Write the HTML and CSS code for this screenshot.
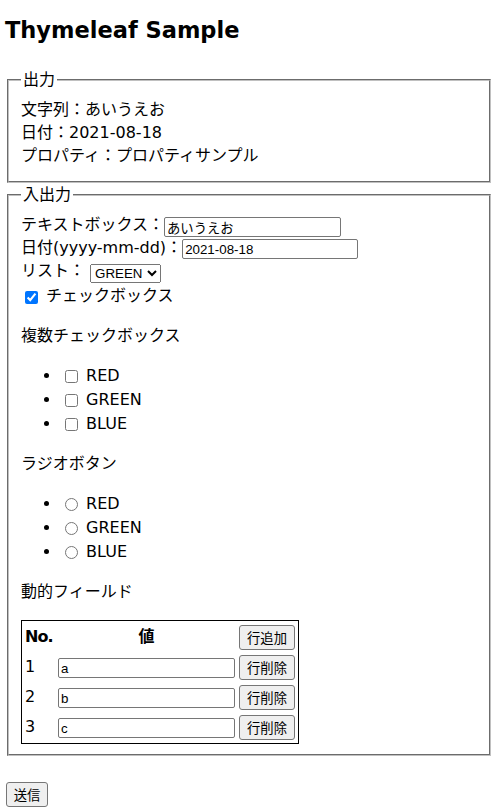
FILE: index.html
```html
<!DOCTYPE html>
<html lang="ja">
<head>
<meta charset="utf-8">
<title>Thymeleaf Sample</title>
<link rel="stylesheet" href="styles.css">
</head>
<body>
<h1 class="title">Thymeleaf Sample</h1>
<fieldset class="box box-out">
  <legend class="box-legend">出力</legend>
  <div class="out-line">文字列：あいうえお</div>
  <div class="out-line">日付：2021-08-18</div>
  <div class="out-line">プロパティ：プロパティサンプル</div>
</fieldset>
<form class="form">
  <fieldset class="box box-io">
    <legend class="box-legend">入出力</legend>
    <div class="field-row row-a">
      <span class="label">テキストボックス：</span>
      <input class="text-input w177 mt4" type="text" value="あいうえお">
    </div>
    <div class="field-row row-b">
      <span class="label">日付(yyyy-mm-dd)：</span>
      <input class="text-input w176 mt3" type="text" value="2021-08-18">
    </div>
    <div class="field-row row-c">
      <span class="label">リスト：</span>
      <select class="list-select">
        <option>RED</option>
        <option selected>GREEN</option>
        <option>BLUE</option>
      </select>
    </div>
    <div class="field-row row-c">
      <input class="single-check" type="checkbox" checked>
      <span class="label">チェックボックス</span>
    </div>
    <p class="section-title first">複数チェックボックス</p>
    <ul class="choice-list">
      <li><input class="choice" type="checkbox"> RED</li>
      <li><input class="choice" type="checkbox"> GREEN</li>
      <li><input class="choice" type="checkbox"> BLUE</li>
    </ul>
    <p class="section-title">ラジオボタン</p>
    <ul class="choice-list">
      <li><input class="choice" type="radio" name="color"> RED</li>
      <li><input class="choice" type="radio" name="color"> GREEN</li>
      <li><input class="choice" type="radio" name="color"> BLUE</li>
    </ul>
    <p class="section-title">動的フィールド</p>
    <table class="dyn-table">
      <tr>
        <th class="col-no">No.</th>
        <th>値</th>
        <th><button type="button" class="btn row-btn">行追加</button></th>
      </tr>
      <tr>
        <td>1</td>
        <td><input class="text-input w177 cell-input" type="text" value="a"></td>
        <td><button type="button" class="btn row-btn">行削除</button></td>
      </tr>
      <tr>
        <td>2</td>
        <td><input class="text-input w177 cell-input" type="text" value="b"></td>
        <td><button type="button" class="btn row-btn">行削除</button></td>
      </tr>
      <tr>
        <td>3</td>
        <td><input class="text-input w177 cell-input" type="text" value="c"></td>
        <td><button type="button" class="btn row-btn">行削除</button></td>
      </tr>
    </table>
  </fieldset>
  <button type="submit" class="btn submit-btn">送信</button>
</form>
</body>
</html>
```

FILE: styles.css
```css
html {
  background: #ffffff;
}

body {
  margin: 0 5px;
  font-family: "DejaVu Sans", "Noto Sans CJK JP", sans-serif;
  font-size: 16px;
  line-height: 24px;
  color: #000000;
}

.title {
  font-size: 22.5px;
  font-weight: bold;
  line-height: 36px;
  margin: 12px 0 20px;
}

.form {
  margin: 0;
}

.box {
  margin: 0 2px;
  border: 2px groove rgb(192, 192, 192);
  min-width: 0;
}

.box-out {
  padding: 6px 12px 14px;
}

.box-io {
  padding: 6px 12px 10px;
}

.box-legend {
  padding: 0 2px;
  line-height: 24px;
}

.out-line {
  line-height: 23px;
}

.field-row {
  display: flex;
  align-items: flex-start;
  height: 23px;
}

.row-c {
  height: 25px;
}

.label {
  line-height: 24px;
  white-space: nowrap;
}

.text-input {
  box-sizing: border-box;
  height: 20px;
  margin: 0;
  padding: 1px 2px;
  border: 1px solid #767676;
  border-radius: 2px;
  background: #ffffff;
  color: #000000;
  font-family: "Liberation Sans", "Noto Sans CJK JP", sans-serif;
  font-size: 13.333px;
  line-height: 16px;
}

.w177 {
  width: 177px;
}

.w176 {
  width: 176px;
}

.mt4 {
  margin-top: 4px;
}

.mt3 {
  margin-top: 3px;
}

.list-select {
  box-sizing: border-box;
  width: 71px;
  height: 19px;
  margin: 5px 0 0 5px;
  font-family: "Liberation Sans", sans-serif;
  font-size: 13.333px;
}

.single-check {
  width: 13px;
  height: 13px;
  margin: 7px 8px 0 4px;
}

.section-title {
  margin: 16px 0;
  line-height: 24px;
}

.section-title.first {
  margin-top: 15px;
}

.choice-list {
  margin: 16px 0;
  padding-left: 40px;
}

.choice-list li {
  line-height: 24px;
  height: 24px;
}

.choice {
  width: 13px;
  height: 13px;
  margin: 6px 3px 0 4px;
  vertical-align: top;
}

.dyn-table {
  border: 1px solid #000000;
  border-spacing: 2px;
}

.dyn-table th,
.dyn-table td {
  padding: 1px;
  line-height: 26px;
  white-space: nowrap;
}

.dyn-table th {
  font-weight: bold;
}

.dyn-table td:first-child {
  text-align: left;
}

.col-no {
  width: 29px;
  letter-spacing: -1px;
  text-align: left;
}

.cell-input {
  vertical-align: top;
  margin-top: 4px;
}

.btn {
  box-sizing: border-box;
  margin: 0;
  padding: 0 6px;
  border: 1px solid #767676;
  border-radius: 3px;
  background: #efefef;
  color: #000000;
  font-family: "Noto Sans CJK JP", sans-serif;
  font-size: 13.333px;
  line-height: 16px;
}

.row-btn {
  width: 56px;
  height: 25px;
  margin-top: 1px;
  vertical-align: top;
}

.submit-btn {
  width: 42px;
  height: 25px;
  margin: 26px 0 0 1px;
}
```
